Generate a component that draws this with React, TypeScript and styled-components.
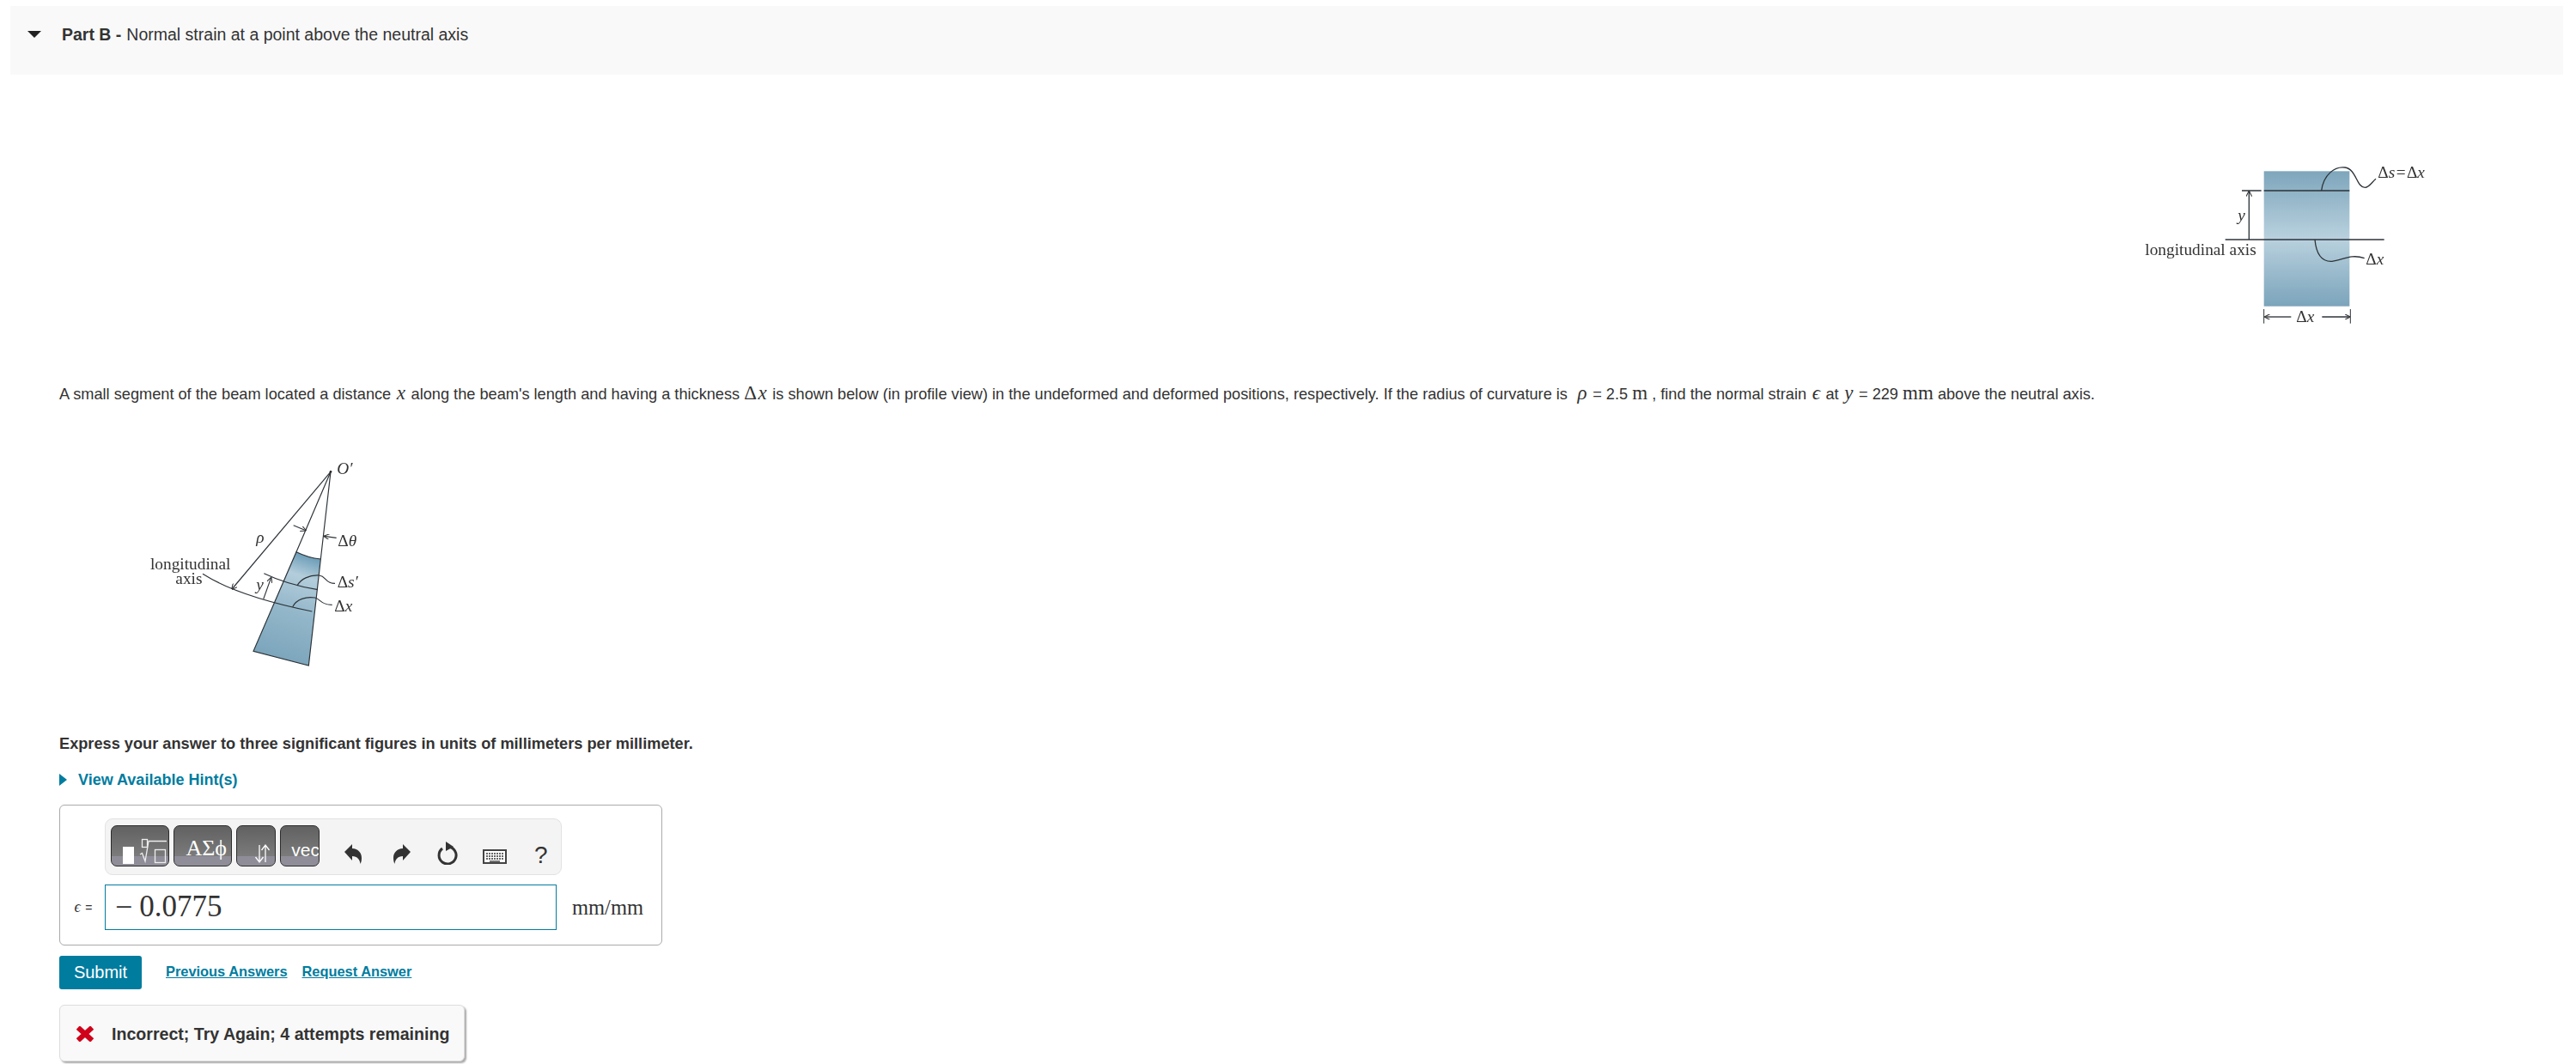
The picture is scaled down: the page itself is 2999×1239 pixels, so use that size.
import styled, { createGlobalStyle } from "styled-components";

const GlobalStyle = createGlobalStyle`
  html, body {
    margin: 0;
    padding: 0;
    background: #fff;
  }
  body {
    font-family: "Liberation Sans", Arial, sans-serif;
    color: #333;
    overflow: hidden;
  }
`

const Page = styled.div`
  width: 2999px;
  height: 1239px;
  padding-top: 7px;
  box-sizing: border-box;
`

const PartHeader = styled.div`
  margin: 0 15px 0 12px;
  height: 80px;
  background-color: #f9f9f9;
  display: flex;
  align-items: flex-start;
  padding: 22px 0 0 20px;
  box-sizing: border-box;
  font-size: 19.5px;
  line-height: 22px;
`

const Caret = styled.span`
  width: 0;
  height: 0;
  border-left: 8px solid transparent;
  border-right: 8px solid transparent;
  border-top: 8px solid #222;
  margin: 7px 24px 0 0;
`

const PartLabel = styled.strong`
  font-weight: 700;
  margin-right: 6px;
`

const TopFigure = styled.div`
  margin-top: 83px;
  padding-right: 139px;
  display: flex;
  justify-content: flex-end;
`

const Figure = styled.svg<{ $w: number; $h: number }>`
  display: block;
  width: ${(p) => p.$w}px;
  height: ${(p) => p.$h}px;
  filter: blur(0.35px);
`

const FigText = styled.text<{ $italic?: boolean; $size?: number }>`
  font-family: "Liberation Serif", serif;
  font-size: ${(p) => p.$size ?? 58}px;
  font-style: ${(p) => (p.$italic ? "italic" : "normal")};
  fill: #333;
`

const Content = styled.div`
  padding-left: 69px;
`

const Statement = styled.p`
  margin: 56px 0 0;
  font-size: 18.2px;
  line-height: 24px;
  white-space: nowrap;
`

const MathVar = styled.span<{ $size?: number }>`
  font-family: "Liberation Serif", serif;
  font-style: italic;
  font-size: ${(p) => p.$size ?? 23}px;
  margin: 0 1.5px;
`

const MathRoman = styled.span`
  font-family: "Liberation Serif", serif;
  font-size: 23px;
`

const LowerFigure = styled.div`
  margin: 50px 0 0 81px;
`

const Instruction = styled.p`
  margin: 63px 0 0;
  font-size: 18.2px;
  line-height: 24px;
  font-weight: 700;
`

const HintToggle = styled.a`
  margin-top: 18px;
  display: flex;
  align-items: center;
  font-size: 18px;
  line-height: 24px;
  font-weight: 700;
  color: #007c9f;
`

const HintCaret = styled.span`
  width: 0;
  height: 0;
  border-top: 7px solid transparent;
  border-bottom: 7px solid transparent;
  border-left: 9px solid #007c9f;
  margin-right: 13px;
`

const AnswerBox = styled.div`
  margin-top: 17px;
  width: 702px;
  height: 164px;
  box-sizing: border-box;
  border: 1px solid #aaa;
  border-radius: 6px;
  padding: 15px 0 0 52px;
`

const Toolbar = styled.div`
  width: 532px;
  height: 66px;
  box-sizing: border-box;
  background-color: #f4f4f4;
  border: 1px solid #e2e2e2;
  border-radius: 9px;
  padding: 7px 0 0 6px;
  display: flex;
  align-items: flex-start;
`

const ToolButton = styled.div<{ $w: number }>`
  width: ${(p) => p.$w}px;
  height: 48px;
  margin-right: 5px;
  box-sizing: border-box;
  border: 1px solid #2c2c2c;
  border-radius: 7px;
  overflow: hidden;
  background: linear-gradient(#616161 0%, #7b7b7b 76%, #8f8d98 77%, #8f8d98 100%);
  color: #fff;
  display: flex;
  align-items: flex-end;
  justify-content: flex-end;
`

const GreekLabel = styled.span`
  font-family: "Liberation Serif", serif;
  font-size: 26px;
  line-height: 32px;
  margin: 0 5px 4px 0;
`

const VecLabel = styled.span`
  font-size: 21px;
  line-height: 28px;
  margin: 0 -1px 4px 0;
`

const ActionIcon = styled.svg<{ $left: number; $top?: number }>`
  display: block;
  margin: ${(p) => p.$top ?? 22}px 0 0 ${(p) => p.$left}px;
  flex: none;
`

const HelpMark = styled.span`
  font-size: 28px;
  line-height: 30px;
  color: #333;
  margin: 20px 0 0 32px;
`

const AnswerRow = styled.div`
  display: flex;
  align-items: center;
  margin: 11px 0 0 -52px;
`

const VarLabel = styled.span`
  width: 52px;
  box-sizing: border-box;
  padding-left: 15px;
  font-size: 14px;
  white-space: nowrap;
`

const AnswerInput = styled.div`
  width: 526px;
  height: 53px;
  box-sizing: border-box;
  border: 1px solid #007c9f;
  display: flex;
  align-items: center;
  padding: 0 0 2px 11px;
  font-family: "Liberation Serif", serif;
  font-size: 35px;
  color: #333;
`

const Minus = styled.span`
  margin-right: 8px;
  font-size: 36px;
`

const Unit = styled.span`
  margin-left: 18px;
  font-family: "Liberation Serif", serif;
  font-size: 24.5px;
`

const ActionRow = styled.div`
  margin-top: 12px;
  display: flex;
  align-items: center;
`

const SubmitButton = styled.button`
  width: 96px;
  height: 39px;
  border: 0;
  border-radius: 3px;
  padding: 0;
  background-color: #007c9f;
  color: #fff;
  font-family: "Liberation Sans", Arial, sans-serif;
  font-size: 20px;
  margin-right: 28px;
`

const TextLink = styled.a`
  font-size: 16.4px;
  font-weight: 700;
  color: #007c9f;
  text-decoration: underline;
  margin-right: 17px;
  position: relative;
  top: -1px;
`

const Feedback = styled.div`
  margin-top: 18px;
  width: 472px;
  height: 66px;
  box-sizing: border-box;
  background-color: #f9f9f9;
  border: 1px solid #ddd;
  border-radius: 6px;
  box-shadow: 2px 2px 2px #aaa;
  display: flex;
  align-items: center;
  padding: 2px 0 0 19px;
  font-size: 19.6px;
  font-weight: 700;
  white-space: nowrap;
`

const CrossIcon = styled.svg`
  display: block;
  margin-right: 21px;
  flex: none;
`

const beamGradient = (
  <linearGradient id="beamShade" x1="0" y1="0" x2="0" y2="1">
    <stop offset="0" stopColor="#7ea6bc" />
    <stop offset="0.5" stopColor="#b9d1de" />
    <stop offset="1" stopColor="#7ba4bb" />
  </linearGradient>
)

const segmentGradient = (
  <linearGradient id="segmentShade" x1="0.6" y1="0" x2="0.4" y2="1">
    <stop offset="0" stopColor="#6f9fb9" />
    <stop offset="0.18" stopColor="#b3cddb" />
    <stop offset="0.5" stopColor="#94b7ca" />
    <stop offset="1" stopColor="#79a3ba" />
  </linearGradient>
)

const ArrowHeads = ({ id }: { id: string }) => (
  <marker id={id} viewBox="0 0 10 10" refX="9" refY="5" markerWidth="20" markerHeight="20" markerUnits="userSpaceOnUse" orient="auto-start-reverse">
    <path d="M0 0 L10 5 L0 10" fill="none" stroke="#333" strokeWidth="1.6" />
  </marker>
)

const UndeformedFigure = () => (
  <Figure $w={400} $h={220} viewBox="0 0 1200 660">
    <defs>
      {beamGradient}
      <ArrowHeads id="headA" />
    </defs>
    <rect x="527" y="88" width="299" height="472" fill="url(#beamShade)" />
    <g fill="none" stroke="#2c3338" strokeWidth="4">
      <path d="M450 156 H518 M527 156 H826" />
      <path d="M392 327 H947" />
      <path d="M475 327 V158" markerEnd="url(#headA)" />
      <path d="M728 156 C735 100 775 70 810 75 C850 80 850 145 880 145 C895 145 905 125 918 115" />
      <path d="M705 327 C710 380 730 405 765 403 C800 400 830 375 878 392" />
      <path d="M527 570 V620 M829 570 V620" strokeWidth="3" />
      <path d="M622 597 H530" markerEnd="url(#headA)" />
      <path d="M730 597 H827" markerEnd="url(#headA)" />
    </g>
    <FigText x="436" y="262" $italic>y</FigText>
    <FigText x="112" y="380">longitudinal axis</FigText>
    <FigText x="925" y="112">Δ<tspan fontStyle="italic">s</tspan><tspan dx="4">=</tspan><tspan dx="4">Δ</tspan><tspan fontStyle="italic">x</tspan></FigText>
    <FigText x="883" y="415">Δ<tspan fontStyle="italic">x</tspan></FigText>
    <FigText x="640" y="615">Δ<tspan fontStyle="italic">x</tspan></FigText>
  </Figure>
)

const DeformedFigure = () => (
  <Figure $w={320} $h={270} viewBox="0 0 960 810">
    <defs>
      {segmentGradient}
      <ArrowHeads id="headB" />
    </defs>
    <path d="M585 365 Q625 385 670 390 L628 762 L435 712 Z" fill="url(#segmentShade)" stroke="#2c3338" strokeWidth="3.5" />
    <g fill="none" stroke="#2c3338" strokeWidth="3.5">
      <path d="M705 85 L585 365 M705 85 L670 390" />
      <path d="M705 85 L360 495" markerEnd="url(#headB)" />
      <path d="M575 272 L618 290" markerEnd="url(#headB)" />
      <path d="M725 316 L682 310" markerEnd="url(#headB)" />
      <path d="M258 442 Q380 520 640 573" />
      <path d="M472 440 Q550 478 660 497" />
      <path d="M470 530 L497 455" markerEnd="url(#headB)" />
      <path d="M588 483 C600 460 630 445 665 447 C690 450 685 475 720 475" />
      <path d="M572 557 C585 530 620 520 650 525 C670 530 670 550 710 550" />
    </g>
    <circle cx="705" cy="85" r="4" fill="#222" />
    <FigText x="727" y="92" $italic>O′</FigText>
    <FigText x="445" y="332" $italic>ρ</FigText>
    <FigText x="730" y="345">Δ<tspan fontStyle="italic">θ</tspan></FigText>
    <FigText x="75" y="425">longitudinal</FigText>
    <FigText x="163" y="478">axis</FigText>
    <FigText x="445" y="497" $italic>y</FigText>
    <FigText x="728" y="490">Δ<tspan fontStyle="italic">s′</tspan></FigText>
    <FigText x="718" y="572">Δ<tspan fontStyle="italic">x</tspan></FigText>
  </Figure>
)

const RootsGlyph = () => (
  <svg width="66" height="46" viewBox="0 0 66 46" fill="none" stroke="#eee" strokeWidth="1.3">
    <rect x="13" y="24" width="13" height="20" fill="#fff" stroke="none" />
    <rect x="35.500" y="15.500" width="6" height="9" />
    <path d="M33 33 L35.500 31.500 L39 41 L43 17.500 H64" />
    <rect x="50.500" y="27.500" width="12" height="15" />
  </svg>
)

const FlipGlyph = () => (
  <svg width="44" height="46" viewBox="0 0 44 46" fill="none" stroke="#fff" strokeWidth="1.3">
    <path d="M26 22 V42 M21.500 36 L26 42 L30.500 36" />
    <path d="M33 42 V22 M28.500 28 L33 22 L37.500 28" />
  </svg>
)

const App = () => {
  return (
    <Page>
      <GlobalStyle />
      <PartHeader>
        <Caret />
        <PartLabel>Part B -</PartLabel> Normal strain at a point above the neutral axis
      </PartHeader>
      <TopFigure>
        <UndeformedFigure />
      </TopFigure>
      <Content>
        <Statement>
          A small segment of the beam located a distance <MathVar>x</MathVar> along the beam's length and having a thickness <MathRoman>Δ</MathRoman><MathVar>x</MathVar> is shown below (in profile view) in the undeformed and deformed positions, respectively. If the radius of curvature is &nbsp;<MathVar>ρ</MathVar> = 2.5 <MathRoman>m</MathRoman> , find the normal strain <MathVar>ϵ</MathVar> at <MathVar>y</MathVar> = 229 <MathRoman>mm</MathRoman> above the neutral axis.
        </Statement>
        <LowerFigure>
          <DeformedFigure />
        </LowerFigure>
        <Instruction>Express your answer to three significant figures in units of millimeters per millimeter.</Instruction>
        <HintToggle>
          <HintCaret />
          View Available Hint(s)
        </HintToggle>
        <AnswerBox>
          <Toolbar>
            <ToolButton $w={68}><RootsGlyph /></ToolButton>
            <ToolButton $w={68}><GreekLabel>ΑΣϕ</GreekLabel></ToolButton>
            <ToolButton $w={46}><FlipGlyph /></ToolButton>
            <ToolButton $w={46}><VecLabel>vec</VecLabel></ToolButton>
            <ActionIcon $left={24} width="20" height="23" viewBox="0 0 20 23">
              <path d="M0 9 L9 0 V5 C16 5.500 20 10 20 16 C20 19 19.500 21 18.500 23 C18 18 15 14 9 14 V19 Z" fill="#333" />
            </ActionIcon>
            <ActionIcon $left={37} width="20" height="23" viewBox="0 0 20 23">
              <path d="M20 9 L11 0 V5 C4 5.500 0 10 0 16 C0 19 .5 21 1.500 23 C2 18 5 14 11 14 V19 Z" fill="#333" />
            </ActionIcon>
            <ActionIcon $left={31} $top={19} width="24" height="27" viewBox="0 0 24 27">
              <path d="M6 8 A10 10 0 1 0 13 6" fill="none" stroke="#333" strokeWidth="3" />
              <path d="M10 0 L19 6 L10 11 Z" fill="#333" />
            </ActionIcon>
            <ActionIcon $left={29} $top={28} width="28" height="17" viewBox="0 0 28 17">
              <rect x="1" y="1" width="26" height="15" fill="#fff" stroke="#444" strokeWidth="2" />
              <path d="M4 5 H24 M4 8 H24 M4 11 H24" stroke="#666" strokeWidth="2" strokeDasharray="2 1" />
              <path d="M8 14 H20" stroke="#444" strokeWidth="1.500" />
            </ActionIcon>
            <HelpMark>?</HelpMark>
          </Toolbar>
          <AnswerRow>
            <VarLabel><MathVar $size={18}>ϵ</MathVar> =</VarLabel>
            <AnswerInput><Minus>−</Minus>0.0775</AnswerInput>
            <Unit>mm/mm</Unit>
          </AnswerRow>
        </AnswerBox>
        <ActionRow>
          <SubmitButton>Submit</SubmitButton>
          <TextLink>Previous Answers</TextLink>
          <TextLink>Request Answer</TextLink>
        </ActionRow>
        <Feedback>
          <CrossIcon width="20" height="18" viewBox="0 0 20 18">
            <path d="M4 3.500 L16 14.500 M16 3.500 L4 14.500" stroke="#d0021b" strokeWidth="6" strokeLinecap="square" />
          </CrossIcon>
          Incorrect; Try Again; 4 attempts remaining
        </Feedback>
      </Content>
    </Page>
  )
}

export default App
